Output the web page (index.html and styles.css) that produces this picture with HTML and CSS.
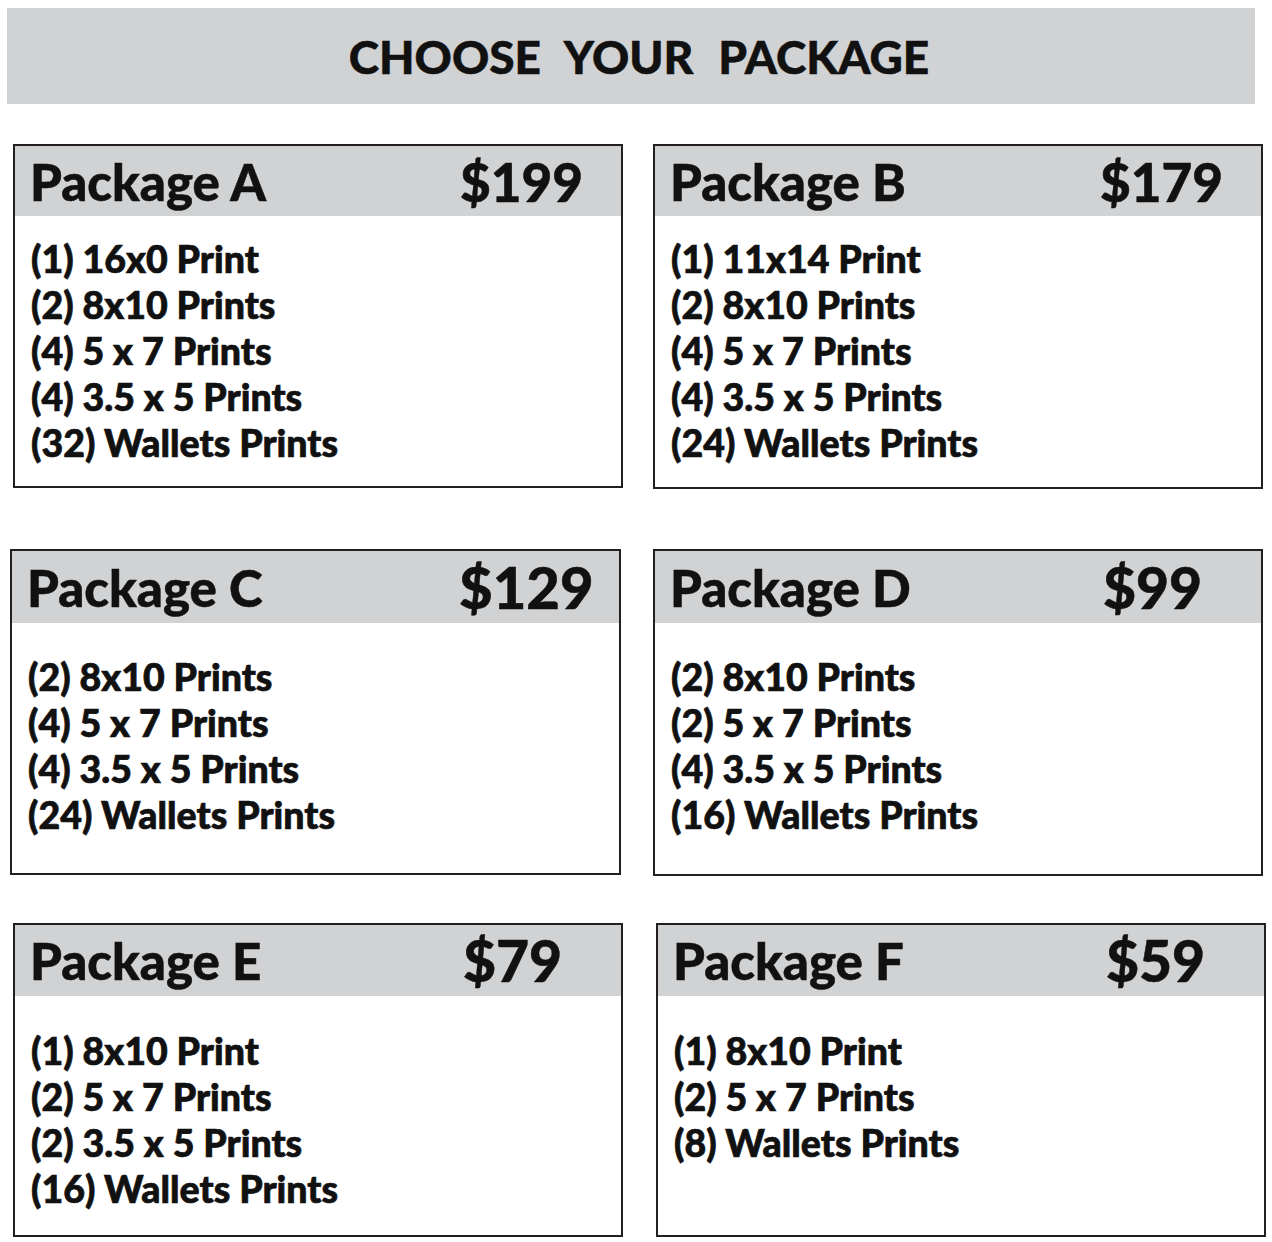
FILE: index.html
```html
<!DOCTYPE html>
<html lang="en">
<head>
<meta charset="utf-8">
<title>Choose Your Package</title>
<link rel="stylesheet" href="styles.css">
</head>
<body>
<header class="banner"><h1 class="banner-title">CHOOSE YOUR PACKAGE</h1></header>

<section class="row row-1">
  <article class="card card-a">
    <div class="card-head"><h2 class="card-name">Package A</h2><span class="card-price">$199</span></div>
    <ul class="items">
      <li>(1) 16x0 Print</li>
      <li>(2) 8x10 Prints</li>
      <li>(4) 5 x 7 Prints</li>
      <li>(4) 3.5 x 5 Prints</li>
      <li>(32) Wallets Prints</li>
    </ul>
  </article>
  <article class="card card-b">
    <div class="card-head"><h2 class="card-name">Package B</h2><span class="card-price">$179</span></div>
    <ul class="items">
      <li>(1) 11x14 Print</li>
      <li>(2) 8x10 Prints</li>
      <li>(4) 5 x 7 Prints</li>
      <li>(4) 3.5 x 5 Prints</li>
      <li>(24) Wallets Prints</li>
    </ul>
  </article>
</section>

<section class="row row-2">
  <article class="card card-c">
    <div class="card-head"><h2 class="card-name">Package C</h2><span class="card-price price-lg">$129</span></div>
    <ul class="items items-low">
      <li>(2) 8x10 Prints</li>
      <li>(4) 5 x 7 Prints</li>
      <li>(4) 3.5 x 5 Prints</li>
      <li>(24) Wallets Prints</li>
    </ul>
  </article>
  <article class="card card-d">
    <div class="card-head"><h2 class="card-name">Package D</h2><span class="card-price price-md">$99</span></div>
    <ul class="items items-low">
      <li>(2) 8x10 Prints</li>
      <li>(2) 5 x 7 Prints</li>
      <li>(4) 3.5 x 5 Prints</li>
      <li>(16) Wallets Prints</li>
    </ul>
  </article>
</section>

<section class="row row-3">
  <article class="card card-e">
    <div class="card-head"><h2 class="card-name">Package E</h2><span class="card-price price-md">$79</span></div>
    <ul class="items items-lower">
      <li>(1) 8x10 Print</li>
      <li>(2) 5 x 7 Prints</li>
      <li>(2) 3.5 x 5 Prints</li>
      <li>(16) Wallets Prints</li>
    </ul>
  </article>
  <article class="card card-f">
    <div class="card-head"><h2 class="card-name">Package F</h2><span class="card-price price-md">$59</span></div>
    <ul class="items items-lower">
      <li>(1) 8x10 Print</li>
      <li>(2) 5 x 7 Prints</li>
      <li>(8) Wallets Prints</li>
    </ul>
  </article>
</section>
</body>
</html>
```

FILE: styles.css
```css
* { box-sizing: border-box; }

body {
  margin: 0;
  background: #ffffff;
  color: #111111;
  font-family: "Lato", "Open Sans", sans-serif;
  font-weight: 900;
}

.banner {
  margin: 8px 17px 0 7px;
  height: 96px;
  background: #d1d2d4;
  display: flex;
  align-items: center;
  justify-content: center;
}

.banner-title {
  margin: 0 0 0 16px;
  font-size: 46px;
  font-weight: 900;
  word-spacing: 0.3em;
  line-height: 1;
  padding-top: 2px;
  -webkit-text-stroke: 0.5px currentColor;
}

.row {
  display: flex;
  align-items: flex-start;
}

.row-1 { margin-top: 40px; }
.row-2 { margin-top: 60px; }
.row-3 { margin-top: 47px; }

.card {
  width: 610px;
  border: 2px solid #231f20;
  background: #ffffff;
}

.card-a { margin-left: 13px; height: 344px; }
.card-b { margin-left: 30px; height: 345px; }
.card-c { margin-left: 10px; height: 326px; width: 611px; }
.card-d { margin-left: 32px; height: 327px; }
.card-e { margin-left: 13px; height: 314px; }
.card-f { margin-left: 33px; height: 314px; }

.card-head {
  height: 70px;
  background: #d1d2d4;
  display: grid;
  grid-template-columns: 430px auto;
  align-items: center;
  padding-left: 15px;
}

.card-c .card-head,
.card-d .card-head { height: 72px; }

.card-e .card-head,
.card-f .card-head { height: 71px; }

.card-name {
  margin: 0;
  font-size: 51px;
  font-weight: 900;
  line-height: 1;
  -webkit-text-stroke: 0.5px currentColor;
}

.card-price {
  font-size: 53px;
  font-weight: 900;
  line-height: 1;
  -webkit-text-stroke: 0.5px currentColor;
}

.price-lg { font-size: 58px; margin-left: 2px; }
.price-md { font-size: 57px; margin-left: 3px; }

.items {
  list-style: none;
  margin: 0;
  padding: 20px 0 0 16px;
  font-size: 37.5px;
  font-weight: 900;
  line-height: 46px;
  -webkit-text-stroke: 0.7px currentColor;
}

.items-low { padding-top: 31px; }
.items-lower { padding-top: 32px; }
```
